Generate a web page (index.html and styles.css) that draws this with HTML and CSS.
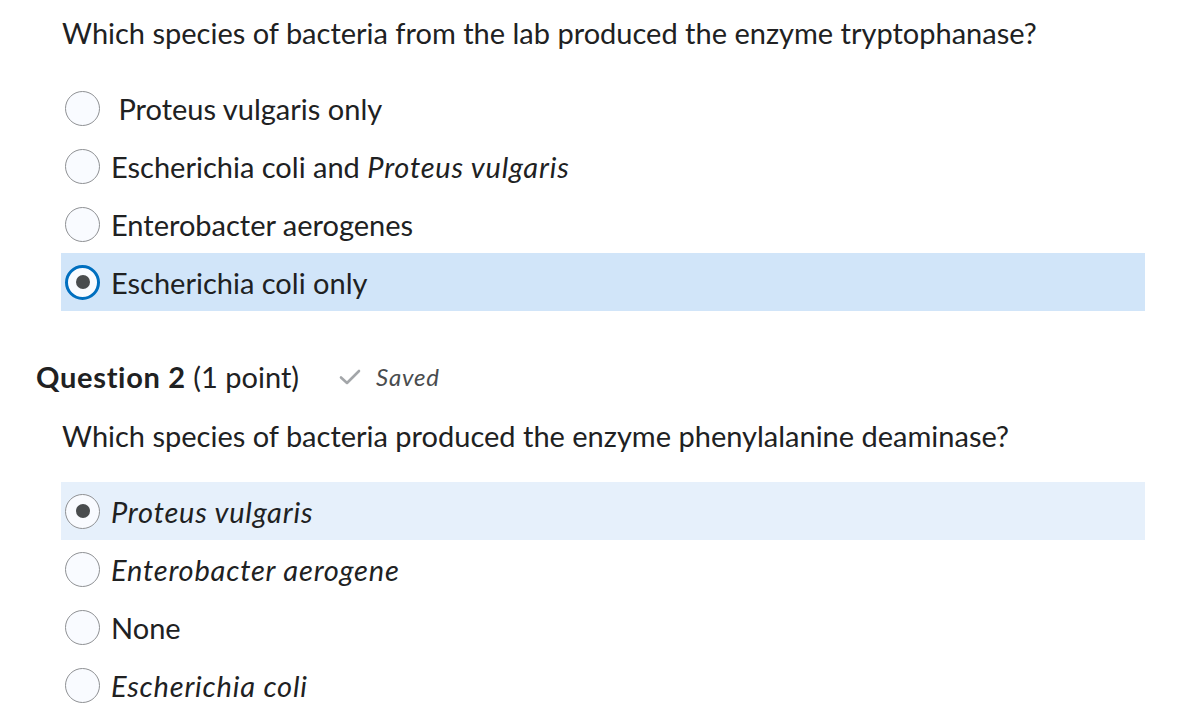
FILE: index.html
```html
<!DOCTYPE html>
<html lang="en">
  <head>
    <meta charset="UTF-8" />
    <title>Quiz - Bacteria Lab</title>
    <link rel="stylesheet" href="styles.css">
  </head>
  <body>
    <div class="quiz">
      <p class="question-text q1">
        Which species of bacteria from the lab produced the enzyme tryptophanase?
      </p>
      <div class="options">
        <label class="option">
          <span class="radio"></span>
          <span class="option-text">&nbsp;Proteus vulgaris only</span>
        </label>
        <label class="option">
          <span class="radio"></span>
          <span class="option-text">Escherichia coli and <em>Proteus vulgaris</em></span>
        </label>
        <label class="option">
          <span class="radio"></span>
          <span class="option-text">Enterobacter aerogenes</span>
        </label>
        <label class="option selected focused">
          <span class="radio"></span>
          <span class="option-text">Escherichia coli only</span>
        </label>
      </div>

      <div class="question-header">
        <span><strong>Question 2</strong> (1 point)</span>
        <span class="saved">
          <svg width="22" height="16" viewBox="0 0 22 16">
            <path d="M2 8.5 L8 14 L20 2" fill="none" stroke="#a3a6a9" stroke-width="2.6" stroke-linecap="round" stroke-linejoin="round" />
          </svg>
          <em>Saved</em>
        </span>
      </div>

      <p class="question-text q2">
        Which species of bacteria produced the enzyme phenylalanine deaminase?
      </p>
      <div class="options">
        <label class="option selected">
          <span class="radio"></span>
          <span class="option-text"><em>Proteus vulgaris</em></span>
        </label>
        <label class="option">
          <span class="radio"></span>
          <span class="option-text"><em>Enterobacter aerogene</em></span>
        </label>
        <label class="option">
          <span class="radio"></span>
          <span class="option-text">None</span>
        </label>
        <label class="option">
          <span class="radio"></span>
          <span class="option-text"><em>Escherichia coli</em></span>
        </label>
      </div>
    </div>
  </body>
</html>
```

FILE: styles.css
```css
body {
  margin: 0;
  font-family: Lato, "Open Sans", sans-serif;
  color: #202122;
  background: #fff;
}

.quiz {
  width: 1145px;
}

em {
  letter-spacing: 0.8px;
}

.question-text {
  font-size: 29px;
  line-height: 40px;
  margin: 0;
  padding-left: 62px;
}

.q1 {
  margin-top: 13px;
  margin-bottom: 26px;
}

.q2 {
  margin-top: 19px;
  margin-bottom: 26px;
}

.options {
  margin-left: 61px;
}

.option {
  display: flex;
  align-items: center;
  height: 58px;
  padding-left: 4px;
  gap: 11px;
  font-size: 29px;
}

.option.selected {
  background-color: #e6f0fb;
}

.option.selected.focused {
  background-color: #d1e5f9;
}

.radio {
  box-sizing: border-box;
  width: 35px;
  height: 35px;
  border-radius: 50%;
  border: 1px solid #8f9194;
  background-color: #f9fbff;
  display: flex;
  align-items: center;
  justify-content: center;
  flex-shrink: 0;
}

.selected .radio::after {
  content: "";
  width: 14px;
  height: 14px;
  border-radius: 50%;
  background-color: #494c4e;
}

.focused .radio {
  border: 3px solid #006fbf;
}

.question-header {
  display: flex;
  align-items: center;
  gap: 40px;
  margin-top: 46px;
  padding-left: 36px;
  font-size: 29px;
  line-height: 40px;
}

.question-header strong {
  font-weight: 700;
  letter-spacing: 0.7px;
}

.saved {
  display: flex;
  align-items: center;
  gap: 15px;
  font-size: 24px;
  color: #494c4e;
}
```
